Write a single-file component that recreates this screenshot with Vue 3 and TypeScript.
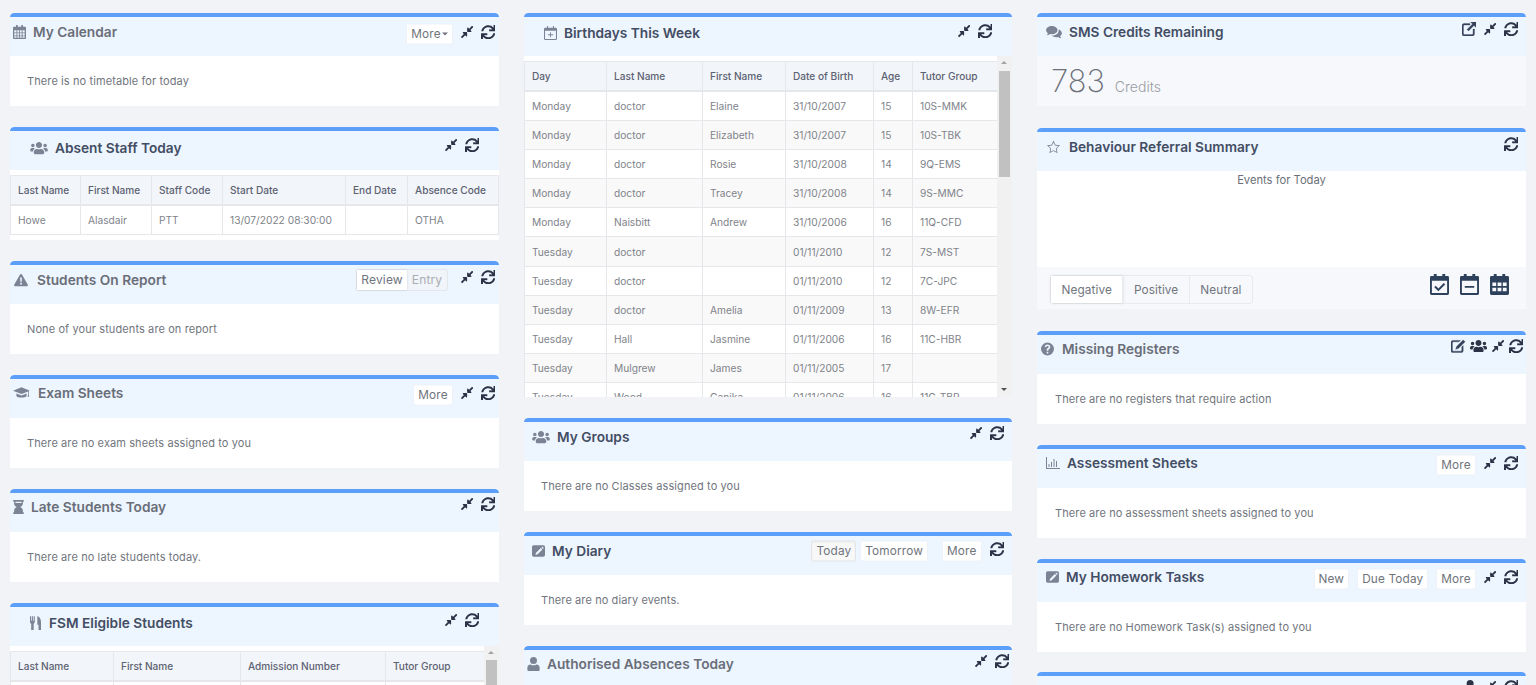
<script setup lang="ts">
interface Btn { label: string; on?: boolean; caret?: boolean }
interface Icon { vb: string; d: string }
interface Table { widths: number[]; head: string[]; rows: string[][]; scroll?: boolean; height: number; thumb?: number[] }
interface Panel {
  id: string; title?: string; dark?: boolean; icon?: string; iconX?: number; iconW?: number; titleX?: number; titleY?: number;
  toolsY: number; pad: number; extra?: string[]; noCompress?: boolean; mb?: number; groupGap?: number;
  btns?: Btn[][]; seg?: Btn[]; msg?: string; msgX?: number; table?: Table; sms?: boolean; chart?: boolean;
}

const icons: Record<string, Icon> = {
  sync: { vb: '0 0 512 512', d: 'M440.65 12.57l4 82.77A247.16 247.16 0 0 0 255.83 8C134.73 8 33.91 94.92 12.29 209.82A12 12 0 0 0 24.09 224h49.05a12 12 0 0 0 11.67-9.26 175.91 175.91 0 0 1 317-56.94l-101.46-4.86a12 12 0 0 0-12.57 12v47.41a12 12 0 0 0 12 12H500a12 12 0 0 0 12-12V12a12 12 0 0 0-12-12h-47.37a12 12 0 0 0-11.98 12.57zM255.83 432a175.61 175.61 0 0 1-146-77.8l101.8 4.87a12 12 0 0 0 12.57-12v-47.4a12 12 0 0 0-12-12H12a12 12 0 0 0-12 12V500a12 12 0 0 0 12 12h47.35a12 12 0 0 0 12-12.6l-4.15-82.57A247.17 247.17 0 0 0 255.83 504c121.11 0 221.93-86.92 243.55-201.82a12 12 0 0 0-11.8-14.18h-49.05a12 12 0 0 0-11.67 9.26A175.86 175.86 0 0 1 255.83 432z' },
  compress: { vb: '0 0 448 512', d: 'M4.686 427.314L104 328l-32.922-31.029C55.958 281.851 66.666 256 88.048 256h112C213.303 256 224 266.745 224 280v112c0 21.382-25.803 32.090-40.922 16.971L152 376l-99.314 99.314c-6.248 6.248-16.379 6.248-22.627 0L4.686 449.941c-6.248-6.248-6.248-16.379 0-22.627zM443.314 84.686L344 184l32.922 31.029c15.120 15.120 4.412 40.971-16.970 40.971h-112C234.697 256 224 245.255 224 232V120c0-21.382 25.803-32.090 40.922-16.971L296 136l99.314-99.314c6.248-6.248 16.379-6.248 22.627 0l25.373 25.373c6.248 6.248 6.248 16.379 0 22.627z' },
  users: { vb: '0 0 640 512', d: 'M96 224c35.300 0 64-28.700 64-64s-28.700-64-64-64-64 28.700-64 64 28.700 64 64 64zm448 0c35.300 0 64-28.700 64-64s-28.700-64-64-64-64 28.700-64 64 28.700 64 64 64zm32 32h-64c-17.600 0-33.500 7.100-45.100 18.600 40.300 22.100 68.900 62 75.100 109.400h66c17.700 0 32-14.300 32-32v-32c0-35.300-28.700-64-64-64zm-256 0c61.900 0 112-50.100 112-112S381.900 32 320 32 208 82.100 208 144s50.100 112 112 112zm76.800 32h-8.300c-20.800 10-43.900 16-68.500 16s-47.600-6-68.500-16h-8.300C179.600 288 128 339.600 128 403.200V432c0 26.500 21.500 48 48 48h288c26.500 0 48-21.500 48-48v-28.800c0-63.600-51.600-115.200-115.200-115.200zm-223.700-13.400C161.500 263.100 145.600 256 128 256H64c-35.300 0-64 28.700-64 64v32c0 17.700 14.300 32 32 32h65.900c6.300-47.400 34.900-87.300 75.200-109.400z' },
  calendar: { vb: '0.5 0 15 16', d: 'M4 0h2v2h4V0h2v2h2.500A1 1 0 0 1 15.500 3v12a1 1 0 0 1-1 1h-13a1 1 0 0 1-1-1V3a1 1 0 0 1 1-1H4ZM2 6v2.500h2.500V6Zm3.500 0v2.500h2V6Zm3 0v2.500h2V6Zm3 0v2.500H14V6ZM2 9.500V12h2.500V9.500Zm3.500 0V12h2V9.500Zm3 0V12h2V9.500Zm3 0V12H14V9.500ZM2 13v1.500h2.500V13Zm3.500 0v1.500h2V13Zm3 0v1.500h2V13Zm3 0v1.500H14V13Z' },
  warning: { vb: '0 0 16 16', d: 'M8 1c.5 0 .9.3 1.100.7l6.700 11.800c.4.800-.1 1.700-1 1.700H1.200c-.9 0-1.400-.9-1-1.700L6.900 1.700C7.100 1.300 7.500 1 8 1ZM7 5l.2 5h1.600L9 5ZM7 11v2h2v-2Z' },
  cap: { vb: '0 0 18 14', d: 'M9 1 0 4.500 9 8l7-2.700V9l-.6 2h1.800L16.800 9V4.600L18 4.500ZM3.600 7.500V10.500C5 12.300 13 12.300 14.400 10.500V7.500L9 9.700Z' },
  hourglass: { vb: '0 0 12 16', d: 'M0 0h12v2h-1v2c0 2-1.500 3.200-3 4 1.500.8 3 2 3 4v2h1v2H0v-2h1v-2c0-2 1.500-3.200 3-4-1.500-.8-3-2-3-4V2H0Zm2.500 2v1.500h7V2Z' },
  cutlery: { vb: '0 0 12 15', d: 'M0 0h1.200v5h.8V0h1.200v5h.8V0h1.200v6.500C5.200 7.500 4.500 8 4 8.300V15H1.300V8.300C.7 8 0 7.500 0 6.500ZM8 0c3 .5 4 3.500 4 7v8H9.300V9.500H8Z' },
  calPlus: { vb: '0.5 0 15 16', d: 'M4 0h1.200v2h5.600V0H12v2h2a1.500 1.500 0 0 1 1.500 1.500v11A1.500 1.500 0 0 1 14 16H2A1.500 1.500 0 0 1 .5 14.500v-11A1.500 1.500 0 0 1 2 2h2ZM1.700 5.500v9c0 .2.100.3.300.3h12c.2 0 .3-.1.300-.3v-9ZM7.500 7h1v2.500H11v1H8.500V13h-1v-2.500H5v-1h2.500Z' },
  pen: { vb: '0 0 16 16', d: 'M2 1h12a2 2 0 0 1 2 2v10a2 2 0 0 1-2 2H2a2 2 0 0 1-2-2V3a2 2 0 0 1 2-2Zm8.800 3.200L5 10l-.8 2.800L7 12l5.800-5.800ZM11.500 3.500l2 2 .5-.5c.4-.4.400-.9 0-1.300l-.7-.7c-.4-.4-.9-.4-1.300 0Z' },
  user: { vb: '0 0 14 16', d: 'M7 0a4 4 0 1 1 0 8 4 4 0 0 1 0-8ZM3.500 8.500C4.500 9.200 5.700 9.500 7 9.500s2.500-.3 3.500-1C12.700 8.500 14 10.200 14 12.500V14.500c0 .8-.7 1.500-1.500 1.500h-11C.7 16 0 15.300 0 14.500V12.500C0 10.200 1.300 8.500 3.500 8.500Z' },
  comments: { vb: '0 0 18 16', d: 'M6.500 1C10 1 13 3 13 5.800s-3 4.800-6.500 4.800c-.8 0-1.500-.1-2.200-.3C3.300 11.100 2 11.700.6 11.800c.7-.7 1.200-1.600 1.400-2.500C.8 8.400 0 7.200 0 5.800 0 3 3 1 6.500 1ZM14.300 5.200C16.500 5.900 18 7.500 18 9.300c0 1.300-.8 2.500-2 3.300.2.900.7 1.800 1.400 2.500-1.400-.1-2.700-.7-3.700-1.500-.7.200-1.400.3-2.200.3-2 0-3.800-.7-5-1.800 4.500.2 8.500-2.500 7.800-6.900Z' },
  star: { vb: '0 0 16 16', d: 'M8 .5l2.300 4.900 5.200.7-3.800 3.700.9 5.400L8 12.700l-4.600 2.500.9-5.400L.5 6.100l5.200-.7ZM8 2.900 6.300 6.400l-3.800.5 2.800 2.700-.7 3.800L8 11.600l3.400 1.800-.7-3.800 2.800-2.700-3.800-.5Z' },
  question: { vb: '0 0 16 16', d: 'M8 0a8 8 0 1 1 0 16A8 8 0 0 1 8 0ZM7 11.500v2h2v-2ZM8 2.500C6 2.500 4.800 3.600 4.600 5.500l1.900.3C6.600 4.800 7.100 4.300 8 4.300c.8 0 1.400.5 1.400 1.200 0 .6-.4 1-1 1.400C7.400 7.600 7 8.200 7 9.200v1h2v-.7c0-.5.200-.8.800-1.200 1-.7 1.600-1.500 1.600-2.800 0-1.800-1.500-3-3.400-3Z' },
  chartBar: { vb: '0 0 14 12', d: 'M0 0h1v11h13v1H0ZM2.500 7h1v3h-1ZM5 5h1v5H5ZM7.500 2h1v8h-1ZM10 4h1v6h-1Z' },
  external: { vb: '0 0 14 14', d: 'M2 1.500h6v1.500H2.500a1 1 0 0 0-1 1v7.500a1 1 0 0 0 1 1H10a1 1 0 0 0 1-1V7h1.500v5A2 2 0 0 1 10.500 14H2a2 2 0 0 1-2-2V3.500A2 2 0 0 1 2 1.500ZM8.500 0H14v5.500L12 3.500 6.500 9 5 7.500 10.500 2Z' },
  edit: { vb: '0 0 16 14', d: 'M2 1h8L8.500 2.500H2.500a1 1 0 0 0-1 1V11.500a1 1 0 0 0 1 1H10.500a1 1 0 0 0 1-1V8L13 6.500V12a2 2 0 0 1-2 2H2a2 2 0 0 1-2-2V3a2 2 0 0 1 2-2ZM13 0.500 15 2.500 8 9.500 5 10.500 6 7.500Z' },
  calCheck: { vb: '0 0 20 22', d: 'M4 0h3v2h6V0h3v2h2.500A1.500 1.500 0 0 1 20 3.500v17a1.500 1.500 0 0 1-1.500 1.500h-17A1.500 1.500 0 0 1 0 20.500v-17A1.500 1.500 0 0 1 1.500 2H4ZM2 7v13h16V7ZM14.500 9.500 16 11l-7.200 7L4.500 13.900 6 12.400l2.800 2.700Z' },
  calMinus: { vb: '0 0 20 22', d: 'M4 0h3v2h6V0h3v2h2.500A1.500 1.500 0 0 1 20 3.500v17a1.500 1.500 0 0 1-1.500 1.500h-17A1.500 1.500 0 0 1 0 20.500v-17A1.500 1.500 0 0 1 1.500 2H4ZM2 7v13h16V7ZM5 12.500h10v2H5Z' },
  calGrid: { vb: '0 0 20 22', d: 'M4 0h3v2h6V0h3v2h2.500A1.500 1.500 0 0 1 20 3.500v17a1.500 1.500 0 0 1-1.500 1.500h-17A1.500 1.500 0 0 1 0 20.500v-17A1.500 1.500 0 0 1 1.500 2H4ZM2.500 9v3.500h4V9Zm5.500 0v3.500h4V9Zm5.500 0v3.500h4V9ZM2.500 14.500V18h4v-3.500Zm5.500 0V18h4v-3.500Zm5.500 0V18h4v-3.500Z' },
}

const birthdays: string[][] = [
  ['Monday', 'doctor', 'Elaine', '31/10/2007', '15', '10S-MMK'],
  ['Monday', 'doctor', 'Elizabeth', '31/10/2007', '15', '10S-TBK'],
  ['Monday', 'doctor', 'Rosie', '31/10/2008', '14', '9Q-EMS'],
  ['Monday', 'doctor', 'Tracey', '31/10/2008', '14', '9S-MMC'],
  ['Monday', 'Naisbitt', 'Andrew', '31/10/2006', '16', '11Q-CFD'],
  ['Tuesday', 'doctor', '', '01/11/2010', '12', '7S-MST'],
  ['Tuesday', 'doctor', '', '01/11/2010', '12', '7C-JPC'],
  ['Tuesday', 'doctor', 'Amelia', '01/11/2009', '13', '8W-EFR'],
  ['Tuesday', 'Hall', 'Jasmine', '01/11/2006', '16', '11C-HBR'],
  ['Tuesday', 'Mulgrew', 'James', '01/11/2005', '17', ''],
  ['Tuesday', 'Wood', 'Ganika', '01/11/2006', '16', '11C-TBR'],
]

const columns: Panel[][] = [
  [
    { id: 'cal', title: 'My Calendar', icon: 'calendar', iconX: 3, iconW: 13, titleX: 23, titleY: 19, toolsY: 19, pad: 4, btns: [[{ label: 'More', caret: true }]], msg: 'There is no timetable for today', msgX: 17 },
    { id: 'abs', title: 'Absent Staff Today', dark: true, icon: 'users', iconX: 20, iconW: 18, titleX: 45, titleY: 21, toolsY: 18, pad: 20, mb: 21.5, table: { widths: [70, 71, 71, 123, 62, 91], head: ['Last Name', 'First Name', 'Staff Code', 'Start Date', 'End Date', 'Absence Code'], rows: [['Howe', 'Alasdair', 'PTT', '13/07/2022 08:30:00', '', 'OTHA']], height: 70 } },
    { id: 'rep', title: 'Students On Report', icon: 'warning', iconX: 3, iconW: 16, titleX: 27, titleY: 19, toolsY: 16, pad: 4, seg: [{ label: 'Review', on: true }, { label: 'Entry' }], msg: 'None of your students are on report', msgX: 17 },
    { id: 'exam', title: 'Exam Sheets', icon: 'cap', iconX: 3, iconW: 17, titleX: 28, titleY: 18, toolsY: 18, pad: 4, btns: [[{ label: 'More' }]], msg: 'There are no exam sheets assigned to you', msgX: 17 },
    { id: 'late', title: 'Late Students Today', icon: 'hourglass', iconX: 3, iconW: 11, titleX: 21, titleY: 18, toolsY: 15, pad: 4, msg: 'There are no late students today.', msgX: 17 },
    { id: 'fsm', title: 'FSM Eligible Students', dark: true, icon: 'cutlery', iconX: 20, iconW: 11, titleX: 39, titleY: 20, toolsY: 17, pad: 20, table: { widths: [103, 127, 145, 99], head: ['Last Name', 'First Name', 'Admission Number', 'Tutor Group'], rows: [['', '', '', '']], scroll: true, height: 120, thumb: [14, 30] } },
  ],
  [
    { id: 'bd', title: 'Birthdays This Week', dark: true, icon: 'calPlus', iconX: 20, iconW: 13, titleX: 40, titleY: 20, toolsY: 18, pad: 20, mb: 21.5, table: { widths: [82, 96, 83, 88, 39, 85], head: ['Day', 'Last Name', 'First Name', 'Date of Birth', 'Age', 'Tutor Group'], rows: birthdays, scroll: true, height: 341, thumb: [15, 106] } },
    { id: 'grp', title: 'My Groups', dark: true, icon: 'users', iconX: 8, iconW: 18, titleX: 33, titleY: 19, toolsY: 15, pad: 8, msg: 'There are no Classes assigned to you', msgX: 17 },
    { id: 'dia', title: 'My Diary', dark: true, icon: 'pen', iconX: 8, iconW: 13, titleX: 28, titleY: 19, toolsY: 17, pad: 8, noCompress: true, groupGap: 14, btns: [[{ label: 'Today', on: true }, { label: 'Tomorrow' }], [{ label: 'More' }]], msg: 'There are no diary events.', msgX: 17 },
    { id: 'aut', title: 'Authorised Absences Today', icon: 'user', iconX: 3, iconW: 13, titleX: 23, titleY: 18, toolsY: 15, pad: 3 },
  ],
  [
    { id: 'sms', title: 'SMS Credits Remaining', dark: true, icon: 'comments', iconX: 9, iconW: 16, titleX: 32, titleY: 19, toolsY: 16, pad: 8, mb: 22, extra: ['external'], sms: true },
    { id: 'beh', title: 'Behaviour Referral Summary', dark: true, icon: 'star', iconX: 9, iconW: 15, titleX: 32, titleY: 19, toolsY: 16, pad: 8, mb: 22.5, noCompress: true, chart: true },
    { id: 'mis', title: 'Missing Registers', icon: 'question', iconX: 4, iconW: 13, titleX: 25, titleY: 18, toolsY: 15, pad: 3, extra: ['edit', 'users'], msg: 'There are no registers that require action', msgX: 18 },
    { id: 'ass', title: 'Assessment Sheets', dark: true, icon: 'chartBar', iconX: 9, iconW: 14, titleX: 30, titleY: 18, toolsY: 18, pad: 8, btns: [[{ label: 'More' }]], msg: 'There are no assessment sheets assigned to you', msgX: 18 },
    { id: 'hw', title: 'My Homework Tasks', dark: true, icon: 'pen', iconX: 9, iconW: 13, titleX: 29, titleY: 18, toolsY: 18, pad: 8, mb: 20, btns: [[{ label: 'New' }], [{ label: 'Due Today' }], [{ label: 'More' }]], msg: 'There are no Homework Task(s) assigned to you', msgX: 18 },
    { id: 'end', toolsY: 15, pad: 8, extra: ['user'] },
  ],
]

const toolIcons = (p: Panel): string[] => [...(p.extra ?? []), ...(p.noCompress ? [] : ['compress']), 'sync']
</script>

<template>
  <div class="page">
    <div v-for="(col, ci) in columns" :key="ci" class="col">
      <section v-for="p in col" :key="p.id" class="panel" :style="{ marginBottom: (p.mb ?? 21) + 'px' }">
        <header class="head">
          <svg v-if="p.icon" class="ticon" :style="{ left: p.iconX + 'px', width: p.iconW + 'px', top: (p.titleY ?? 0) + 'px' }" :viewBox="icons[p.icon].vb"><path :d="icons[p.icon].d" fill-rule="evenodd" /></svg>
          <h2 v-if="p.title" class="title" :class="{ dark: p.dark }" :style="{ left: p.titleX + 'px', top: p.titleY + 'px' }">{{ p.title }}</h2>
          <div class="tools" :style="{ right: p.pad + 'px', top: p.toolsY + 'px' }">
            <div v-if="p.seg" class="seg">
              <span v-for="s in p.seg" :key="s.label" :class="{ on: s.on }">{{ s.label }}</span>
            </div>
            <div v-for="(group, gi) in p.btns ?? []" :key="gi" class="btns" :style="{ marginLeft: (gi > 0 ? (p.groupGap ?? 8) : 0) + 'px' }">
              <span v-for="b in group" :key="b.label" class="btn" :class="{ on: b.on }">{{ b.label }}<i v-if="b.caret" class="caret"></i></span>
            </div>
            <div class="glyphs" :class="{ tight: (p.extra?.length ?? 0) > 1 }">
              <svg v-for="(t, ti) in toolIcons(p)" :key="ti" class="tool" :class="t" :viewBox="icons[t].vb"><path :d="icons[t].d" fill-rule="evenodd" /></svg>
            </div>
          </div>
        </header>

        <div v-if="p.msg" class="msg" :style="{ paddingLeft: p.msgX + 'px' }">{{ p.msg }}</div>

        <div v-if="p.table" class="tbody" :class="{ scrolls: p.table.scroll }" :style="{ height: p.table.height + 'px' }">
          <table :style="{ width: p.table.widths.reduce((a, b) => a + b, 0) + 'px' }">
            <colgroup><col v-for="(w, i) in p.table.widths" :key="i" :style="{ width: w + 'px' }" /></colgroup>
            <thead><tr><th v-for="h in p.table.head" :key="h">{{ h }}</th></tr></thead>
            <tbody>
              <tr v-for="(r, ri) in p.table.rows" :key="ri"><td v-for="(c, i) in r" :key="i">{{ c }}</td></tr>
            </tbody>
          </table>
          <div v-if="p.table.scroll" class="bar">
            <i class="up"></i>
            <b :style="{ top: p.table.thumb![0] + 'px', height: p.table.thumb![1] + 'px' }"></b>
            <i class="down"></i>
          </div>
        </div>

        <div v-if="p.sms" class="sms"><span class="num">783</span><span class="cred">Credits</span></div>

        <template v-if="p.chart">
          <div class="chart">Events for Today</div>
          <div class="foot">
            <div class="tabs"><span class="on">Negative</span><span>Positive</span><span>Neutral</span></div>
            <div class="cals">
              <svg v-for="c in ['calCheck', 'calMinus', 'calGrid']" :key="c" :viewBox="icons[c].vb"><path :d="icons[c].d" fill-rule="evenodd" /></svg>
            </div>
          </div>
        </template>
      </section>
    </div>
  </div>
</template>

<style>
html, body { margin: 0; background: #f2f3f7; overflow: hidden; }
</style>

<style scoped>
.page {
  display: grid;
  grid-template-columns: 489px 488px 489px;
  column-gap: 25px;
  padding: 13px 10px 0;
  height: 672px;
  overflow: hidden;
  font-family: Inter, "Liberation Sans", sans-serif;
  font-size: 11px;
  color: #6b6f78;
  background: #f2f3f7;
}
.col { display: flex; flex-direction: column; }
.panel { border-radius: 4px 4px 0 0; overflow: hidden; background: #fff; flex: none; }
.head {
  position: relative;
  height: 38.5px;
  border-top: 4px solid #5c9ffb;
  border-radius: 4px 4px 0 0;
  background: #edf5ff;
}
.ticon { position: absolute; height: 14px; margin-top: -11px; fill: #7b8494; }
.title {
  position: absolute;
  margin: 0;
  line-height: 16px;
  margin-top: -12px;
  font-size: 13.7px;
  font-weight: 600;
  color: #6a6e78;
  white-space: nowrap;
}
.title.dark { color: #434d63; }
.tools { position: absolute; display: flex; align-items: center; margin-top: -14px; height: 20px; }
.glyphs { display: flex; align-items: center; gap: 7.500px; margin-left: 8px; }
.glyphs.tight { gap: 4.500px; }
.tool { width: 12.250px; height: 14px; fill: #2b3447; display: block; }
.tool.sync { width: 14.500px; height: 14.500px; }
.tool.users { width: 17px; }
.tool.external { width: 14px; fill: #36435c; stroke: #36435c; stroke-width: .3; }
.tool.edit { width: 15px; fill: #36435c; stroke: #36435c; stroke-width: .4; }
.btns { display: flex; gap: 4px; transform: translateY(1.500px); }
.btn {
  display: flex;
  align-items: center;
  height: 19px;
  padding: 0 4px;
  background: #fff;
  border-radius: 2px;
  border: 1px solid #eef2f8;
  font-size: 11.8px;
  letter-spacing: .15px;
  color: #6f737c;
  box-sizing: content-box;
}
.btn.on { background: #f8f8f8; border-color: #e2e4e8; box-shadow: inset 0 1px 2px rgba(0,0,0,.06); }
.caret { border: 3.5px solid transparent; border-top-color: #6f737c; border-bottom: 0; margin-left: 1px; }
.seg {
  display: flex;
  height: 20px;
  margin-right: 5px;
  border: 1px solid #e3e6eb;
  border-radius: 3px;
  background: #f1f4f8;
  font-size: 12px;
  letter-spacing: .15px;
  color: #a9adb4;
  transform: translateY(3px);
}
.seg span { padding: 0 4.500px; line-height: 19px; }
.seg .on { background: #fff; color: #6f737c; box-shadow: 0 0 2px rgba(0,0,0,.15); }
.msg { height: 50.5px; line-height: 51px; background: #fff; letter-spacing: .1px; white-space: nowrap; color: #71757d; }
.tbody { position: relative; background: #fff; overflow: hidden; padding-top: 5px; box-sizing: border-box; }
table { border-collapse: collapse; table-layout: fixed; font-size: 10.2px; background: #fff; }
th, td { border: 1px solid #e6e7ea; padding: 0 7px; text-align: left; white-space: nowrap; overflow: hidden; }
th { height: 28px; background: #f2f5f9; font-weight: 500; color: #5c6272; border-bottom-width: 2px; font-size: 10.1px; }
td { height: 28.200px; color: #80838a; }
tbody tr:nth-child(even) td { background: #f9f9f9; }
.bar { position: absolute; top: 0; right: 0; bottom: 0; width: 15px; background: #f1f1f1; }
.bar b { position: absolute; left: 2px; right: 2px; background: #c1c1c1; }
.bar i { position: absolute; left: 4px; border: 3.500px solid transparent; }
.bar .up { top: 5px; border-top: 0; border-bottom-color: #a3a3a3; }
.bar .down { bottom: 6px; border-bottom: 0; border-top-color: #505050; }
.sms { height: 50.5px; background: #f7f8fb; display: flex; align-items: baseline; padding-left: 14px; box-sizing: border-box; padding-top: 5px; line-height: 40px; }
.num { font-size: 31px; font-weight: 200; color: #6d7079; }
.cred { margin-left: 10px; font-size: 14px; font-weight: 300; color: #9a9da4; }
.chart { height: 96px; background: #fff; text-align: center; padding-top: 2px; line-height: 14px; box-sizing: border-box; font-size: 11.2px; }
.foot { height: 42px; background: #f7f8fb; display: flex; justify-content: space-between; padding: 8px 17px 0 13px; box-sizing: border-box; }
.tabs { display: flex; height: 29px; border: 1px solid #e8eaee; border-radius: 3px; font-size: 11.8px; letter-spacing: .1px; color: #71757e; box-sizing: border-box; }
.tabs span { padding: 0 10.500px; line-height: 29px; border-right: 1px solid #e8eaee; }
.tabs span:last-child { border-right: 0; }
.tabs .on { background: #fff; box-shadow: 0 0 3px rgba(0,0,0,.12); }
.cals { display: flex; gap: 11px; margin-top: -1px; }
.cals svg { width: 19px; height: 21px; fill: #2e415c; }
</style>
